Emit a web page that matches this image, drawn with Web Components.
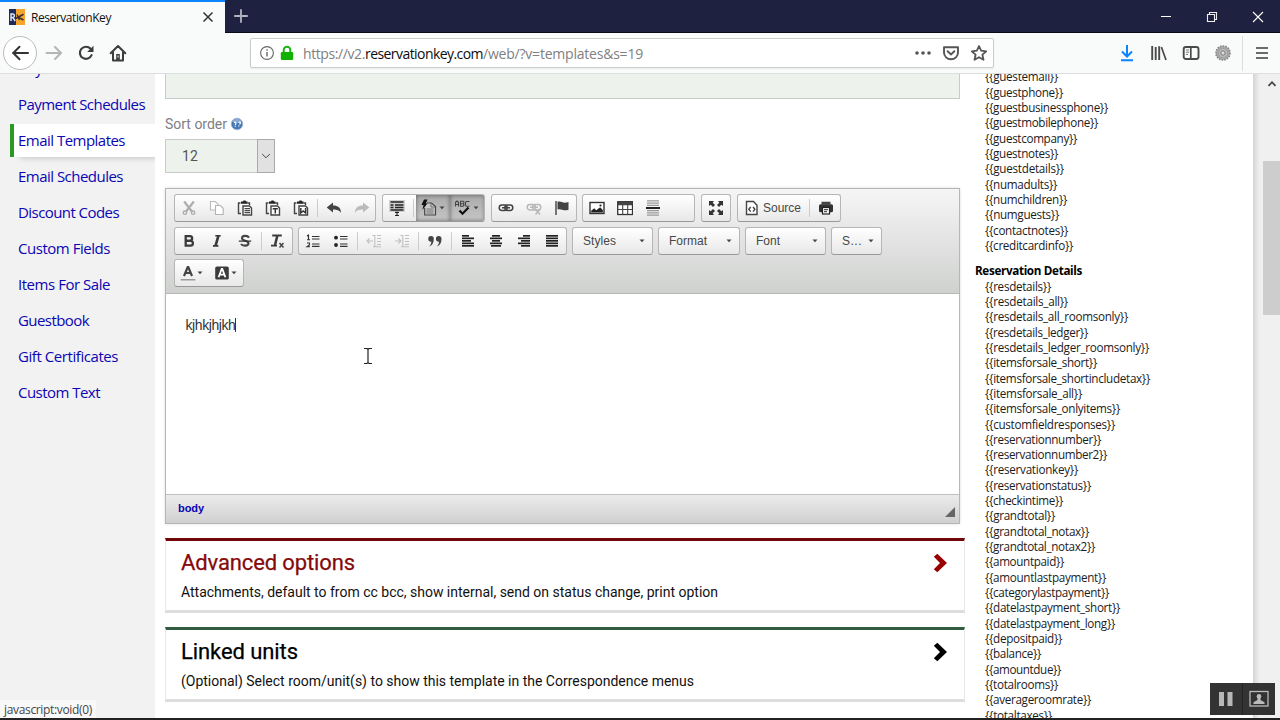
<!DOCTYPE html>
<html lang="en"><head><meta charset="utf-8"><title>ReservationKey</title>
<style>html,body{margin:0;width:1280px;height:720px;overflow:hidden;background:#fff}</style></head>
<body><app-window></app-window>
<script>
const define=(name,html)=>{const t=document.createElement('template');t.innerHTML=html;
customElements.define(name,class extends HTMLElement{constructor(){super();this.attachShadow({mode:'open'}).append(t.content.cloneNode(true));}});};

// Label tracked to a given pixel width
customElements.define('fit-text',class extends HTMLElement{
constructor(){super();this.attachShadow({mode:'open'}).innerHTML='<style>:host{display:inline-block;white-space:nowrap}</style><slot></slot>';}
connectedCallback(){requestAnimationFrame(()=>this.fit());}
fit(){const w=+this.getAttribute('w'),n=this.textContent.length;if(!w)return;
this.style.letterSpacing='0';const d=w-this.getBoundingClientRect().width;this.style.letterSpacing=(d/n)+'px';}
});

const doc='<path d="M3.5 3H1.5V13.5H4M10.5 3h2v2" fill="none" stroke="#444" stroke-width="1.4"/><path d="M4 1.6h2l.5-1.1h2L9 1.6h1.5v2.2H4z" fill="#222"/><path d="M6 6h6.5l2 2v7H6z" fill="#fff" stroke="#444" stroke-width="1.4"/>';
const bars=a=>a.map(([x,w],i)=>`<rect x="${x}" y="${2+i*2.5}" width="${w}" height="1.7" fill="#222"/>`).join('');
const I={
back:[20,'<path d="M18 10H3M9.5 3.8L3.3 10l6.2 6.2" fill="none" stroke="#333" stroke-width="2" stroke-linecap="round"/>'],
fwd:[20,'<path d="M2.5 10H17M11 4l6 6-6 6" fill="none" stroke="#b5b5b6" stroke-width="2" stroke-linecap="round"/>'],
reload:[20,'<path d="M15.6 12.2A6.1 6.1 0 1 1 14.6 5.8" fill="none" stroke="#3c3c3d" stroke-width="2.1" stroke-linecap="round"/><path d="M17.5 2.7v6.3H11.2z" fill="#3c3c3d"/>'],
home:[20,'<path d="M2.7 10.3L10 3l7.3 7.3M5 9.5v8h10v-8" fill="none" stroke="#3c3c3d" stroke-width="2" stroke-linejoin="round" stroke-linecap="round"/><path d="M8.2 11h3.6v6H8.2z" fill="#3c3c3d"/><path d="M10 12.5v2" stroke="#fff"/>'],
info:[16,'<circle cx="8" cy="8" r="6.4" fill="none" stroke="#666" stroke-width="1.1"/><path d="M8 7v4.5M8 4.2v1.6" stroke="#666" stroke-width="1.4"/>'],
lock:[16,'<path d="M4.7 8V5a3.3 3.3 0 0 1 6.6 0v3" fill="none" stroke="#18b511" stroke-width="2"/><rect x="1.8" y="7" width="12.4" height="8" rx="1.2" fill="#12b000"/>'],
dots:[18,'<circle cx="3" cy="9" r="1.8" fill="#555"/><circle cx="9" cy="9" r="1.8" fill="#555"/><circle cx="15" cy="9" r="1.8" fill="#555"/>'],
pocket:[18,'<path d="M2 3.2h14v5.3a7 6.8 0 0 1-14 0z" fill="none" stroke="#555" stroke-width="1.9" stroke-linejoin="round"/><path d="M5.6 7.2L9 10.5l3.4-3.3" fill="none" stroke="#555" stroke-width="1.9" stroke-linecap="round"/>'],
star:[18,'<path d="M9 2l2.1 4.7 5.1.6-3.8 3.4 1.1 5.1L9 13.2l-4.5 2.6 1.1-5.1-3.8-3.4 5.1-.6z" fill="none" stroke="#555" stroke-width="1.8" stroke-linejoin="round"/>'],
down:[18,'<path d="M9 1v11M4 7.5l5 5 5-5M3 16.3h12" fill="none" stroke="#0a84ff" stroke-width="2"/>'],
library:[18,'<path d="M2.2 2v14M5.7 3v13M9.2 2.2V16" stroke="#4a4a4b" stroke-width="1.9"/><path d="M11.4 3l4.6 13" stroke="#4a4a4b" stroke-width="1.7"/>'],
sidebar:[18,'<rect x="1.7" y="3" width="14.8" height="12" rx="2.2" fill="none" stroke="#4a4a4b" stroke-width="1.9"/><path d="M8.8 3v12" stroke="#4a4a4b" stroke-width="1.7"/><path d="M4 6h3M4 8.2h3M4 10.4h2" stroke="#777"/>'],
gear:[18,'<circle cx="9" cy="9" r="7" fill="#aaa" stroke="#888" stroke-width="1.7" stroke-dasharray="1.6 1.1"/><circle cx="9" cy="9" r="4.6" fill="#bbb" stroke="#999" stroke-width=".8"/><circle cx="9" cy="9" r="2.2" fill="#ddd" stroke="#777"/>'],
menu:[16,'<path d="M2 3h12M2 8h12M2 13h12" stroke="#3c3c3d" stroke-width="1.7"/>'],
tabx:[14,'<path d="M2.5 2.5l9 9M11.5 2.5l-9 9" stroke="#333" stroke-width="1.5"/>'],
plus:[16,'<path d="M8 1.2v13.6M1.2 8h13.6" stroke="#b2b3c0" stroke-width="1.8"/>'],
min:[14,'<path d="M2 6.5h10" stroke="#fff" stroke-width="1"/>'],
restore:[14,'<path d="M2.5 4.5h7v7h-7zM4.5 4.5v-2h7v7h-2" fill="none" stroke="#eee" stroke-width="1.1"/>'],
close:[14,'<path d="M2 2l10 10M12 2L2 12" stroke="#fff" stroke-width="1.1"/>'],
fav:[16,'<path fill="#1e2a5a" d="M0 0h8v16H0z"/><path fill="#f5a52b" d="M7 0h9v16H7z"/><path d="M2 12V5h2a1.8 1.8 0 0 1 0 3.5H2M3.8 8.5L6.2 12" stroke="#dfe6f6" stroke-width="1.5" fill="none"/><path d="M6.5 9.5l3-1.5L14.5 5.3M9.5 7.5l1 1.5 4 2" stroke="#3a2b35" stroke-width="1.6" fill="none"/><path d="M8 5.5L10.5 11" stroke="#3a2b35" stroke-width="1.4"/>'],
help:[14,'<circle cx="7" cy="7" r="5.8" fill="#4778b6" stroke="#a4b9d8" stroke-width="1"/><path d="M2 4.5a6 6 0 0 1 10 0C10 6 4 6 2 4.5z" fill="#87a9d5"/><path d="M4 5.5c1-1 2.5-.2 1.8 1L5.2 8M8.5 5.5c1.8-1 3 .2 1 2M5.3 8.8v1M8.8 8.6v1" stroke="#fff" stroke-width="1.2" fill="none"/>'],
cut:[16,'<path d="M3.2 1.5L11.3 12M12.8 1.5L4.7 12" stroke="#aeaeae" stroke-width="2.2"/><circle cx="3.9" cy="12.7" r="1.7" fill="none" stroke="#aeaeae" stroke-width="1.4"/><circle cx="12.1" cy="12.7" r="1.7" fill="none" stroke="#aeaeae" stroke-width="1.4"/>'],
copy:[16,'<path d="M1.5 1.5h4.7L9 4.2V10H1.5z" fill="#fff" stroke="#b9b9b9" stroke-width="1.1"/><path d="M6.5 5.5h4.7l3 2.8v6.2H6.5z" fill="#fff" stroke="#b3b3b3" stroke-width="1.1"/>'],
paste:[16,doc+'<path d="M7.5 8.7h5.5M7.5 10.7h5.5M7.5 12.7h5.5" stroke="#444" stroke-width="1.2"/>'],
pastet:[16,doc+'<path d="M7.7 8.7h5.2M10.3 8.7v4.8" stroke="#333" stroke-width="1.5"/>'],
pastew:[16,doc+'<path d="M7.8 8v5l2.4-2 2.4 2V8" stroke="#333" stroke-width="1.5" fill="none"/>'],
undo:[16,'<path d="M.7 7.5L7 2.5v3c5 0 8 2.2 8 7.5-1.6-2.6-3.7-3.5-8-3.5v3z" fill="#444"/>'],
redo:[16,'<path d="M15.3 7.5L9 2.5v3c-5 0-8 2.2-8 7.5 1.6-2.6 3.7-3.5 8-3.5v3z" fill="#bbb"/>'],
template:[16,'<path fill="#d1d1d1" d="M0 0h16v12H0z"/><path d="M1.5 2h13M1.5 5h3M6 5h8.5M1.5 7.5h3M6 7.5h8.5M1.5 10h13" stroke="#222" stroke-width="1.5"/><path d="M6 12.3h4M8 12v3.8M6 15.6h4" stroke="#222" stroke-width="1.2"/>'],
auto:[18,'<path d="M7 4h4.5l4 3.5V16H4.7V9" fill="#c8c8c8" stroke="#444" stroke-width="1.2"/><path d="M11 4v4h4M6.5 10h7M6.5 12h7M6.5 14h7" fill="none" stroke="#666" stroke-width=".9"/><path d="M4 .5h3.6L5.8 4.5H7.4L2.4 11l1.1-5H1.4z" fill="#111"/>'],
spell:[18,'<path d="M1.5 7.5V3.2L3 2l1.5 1.2v4.3M1.5 5.5h3M6.5 7.3V2.2h2.6q1.8 1.2 0 2.5 1.8 1.3 0 2.6zM6.5 4.7H9M15.5 2.5h-3q-1 0-1 1.2v2.4q0 1.2 1 1.2h3" fill="none" stroke="#444" stroke-width="1.1"/><path d="M5.5 11.5l3 3.2 6-6.3" fill="none" stroke="#111" stroke-width="2.2"/>'],
link:[16,'<rect x="1.2" y="5" width="8" height="5.4" rx="2.7" fill="none" stroke="#444" stroke-width="1.5"/><rect x="6.8" y="5" width="8" height="5.4" rx="2.7" fill="none" stroke="#444" stroke-width="1.5"/><path d="M4 7.7h8" stroke="#444" stroke-width="1.4"/>'],
unlink:[16,'<g fill="none" stroke="#b8b8b8" stroke-width="1.4"><rect x="1.2" y="4.5" width="8.2" height="5.5" rx="2.7"/><rect x="6.6" y="4.5" width="8.2" height="5.5" rx="2.7"/><path d="M4 7.2h8M9.5 9.5l4.5 5M14 9.5l-4.5 5"/></g>'],
flag:[16,'<path d="M2 1v14" stroke="#333" stroke-width="1.3"/><path d="M3.5 1.8c4-1 5 2 11 .3v7.7c-5 1.8-7-1.3-11-.3z" fill="#444"/>'],
image:[16,'<rect x="1" y="2.5" width="14" height="11" fill="#fff" stroke="#333" stroke-width="1.4"/><path d="M2.2 12.5V10.8l3-2.6 2 2 4-3 2.7 3v2.3z" fill="#222"/><circle cx="11.5" cy="5.5" r="1.1" fill="#222"/>'],
table:[16,'<rect x=".7" y="1.7" width="14.8" height="12.8" fill="#fff" stroke="#333" stroke-width="1.3"/><path fill="#444" d="M.7 1.7h14.8v3.5H.7z"/><path d="M1 9.5h14M5.7 4v10.5M10.7 4v10.5" stroke="#444" stroke-width="1.1"/>'],
hr:[16,'<path d="M2 .8h12M2 3.1h12M2 5.3h12M2 10.6h12M2 12.9h12M2 15.1h12" stroke="#999" stroke-width="1.2"/><path d="M1 8h14" stroke="#222" stroke-width="1.8"/>'],
max:[16,'<path d="M1 1h5L4.7 2.7 7 5 5 7 2.7 4.7 1 6zM15 1h-5l1.3 1.7L9 5l2 2 2.3-2.3L15 6zM1 15h5l-1.3-1.7L7 11 5 9l-2.3 2.3L1 10zM15 15h-5l1.3-1.7L9 11l2-2 2.3 2.3L15 10z" fill="#333"/>'],
source:[16,'<path d="M2.5 1.5h7l3.5 3.7v9.3H2.5z" fill="#fff" stroke="#444" stroke-width="1.4"/><path d="M6.7 7L4.8 9.3l1.9 2.3M9 7l1.9 2.3L9 11.6" fill="none" stroke="#444" stroke-width="1.4"/>'],
print:[16,'<path d="M3.5 4.5V1.7h9v2.8" fill="#444"/><rect x="1" y="4.3" width="14" height="8" rx="1.5" fill="#333"/><rect x="4.5" y="7.5" width="7" height="6.5" fill="#fff" stroke="#222" stroke-width="1.2"/><path d="M6 9.7h4M6 11.7h3" stroke="#222"/>'],
bold:[16,'<path d="M4.7 3.2h4.2a2.2 2.2 0 0 1 0 4.5H4.7zM4.7 7.9h4.8a2.4 2.4 0 0 1 0 4.8H4.7z" fill="none" stroke="#3a3a3a" stroke-width="2.3"/>'],
italic:[16,'<path d="M6.3 2.8h5.4M4 12.9h5.4" stroke="#3a3a3a" stroke-width="1.6"/><path d="M9.4 2.8L6.5 12.9" stroke="#3a3a3a" stroke-width="2.6"/>'],
strike:[16,'<path d="M12 4.6C10.5 2.2 5 2.2 5 5.2c0 3 6.7 2 6.5 5.2-.2 2.9-5.9 2.9-7.5.6" fill="none" stroke="#444" stroke-width="2.1"/><path d="M1.8 8.2h12.4" stroke="#333" stroke-width="1.3"/>'],
tx:[16,'<path d="M2.2 2.5h9.6M1 12.7h6" stroke="#3a3a3a" stroke-width="1.8"/><path d="M7.3 3L5 12" stroke="#3a3a3a" stroke-width="2.5"/><path d="M9.5 10l4 4.5M13.5 10l-4 4.5" stroke="#444" stroke-width="1.5"/>'],
ol:[16,'<path d="M7 3.5h7.5M7 6h7.5M7 11h7.5M7 13.3h7.5" stroke="#333" stroke-width="1.2"/><path d="M2 3l1.5-1v4.5M2 6.7h3M2 10h2.4v2L2 13.8h3" fill="none" stroke="#333" stroke-width="1.1"/>'],
ul:[16,'<path d="M7 3.5h7.5M7 6h7.5M7 11h7.5M7 13.3h7.5" stroke="#333" stroke-width="1.2"/><circle cx="3" cy="4.7" r="1.9" fill="#222"/><circle cx="3" cy="12" r="1.9" fill="#222"/>'],
outdent:[16,'<path d="M6.5 2.5H9M11 2.5h4M11 5.5h4M11 8.5h4M11 11.5h4M7 13.7h8M8.8 2v12M1 8h6M3.5 5.5L1 8l2.5 2.5" fill="none" stroke="#c0c0c0" stroke-width="1.1"/>'],
indent:[16,'<path d="M6.5 2.5H9M11 2.5h4M11 5.5h4M11 8.5h4M11 11.5h4M7 13.7h8M8.8 2v12M1 8h6M4.5 5.5L7 8l-2.5 2.5" fill="none" stroke="#c0c0c0" stroke-width="1.1"/>'],
quote:[16,'<path d="M4 3a2.7 2.7 0 0 1 2.8 3c0 4-1.8 6.5-4.6 7.5 1.4-1.5 2.1-3 2.1-4.7A2.8 2.8 0 1 1 4 3zM11.7 3a2.7 2.7 0 0 1 2.8 3c0 4-1.8 6.5-4.6 7.5 1.4-1.5 2.1-3 2.1-4.7A2.8 2.8 0 1 1 11.7 3z" fill="#444"/>'],
al:[16,bars([[2,7],[2,12],[2,9],[2,12],[2,12]])],
ac:[16,bars([[4,8],[2,12],[4,8],[2,12],[3,10]])],
ar:[16,bars([[7,7],[2,12],[5,9],[2,12],[5,9]])],
aj:[16,bars([[2,12],[2,12],[2,12],[2,12],[2,12]])],
fg:[16,'<path d="M4 11L7.7 2.2h.6L12 11M5.3 8h5.4" fill="none" stroke="#444" stroke-width="2.2"/><path d="M.7 14.7h14.6" stroke="#999" stroke-width="1.4"/>'],
bg:[16,'<rect x="1.2" y="1.4" width="13.6" height="13.2" rx="1.6" fill="#3c3c3c"/><path d="M4.6 12.3L7.7 4h.6l3.1 8.3M5.7 9.6h4.6" fill="none" stroke="#fff" stroke-width="1.8"/>'],
caret:[8,'<path d="M1.5 2.6h5L4 5.3z" fill="#444"/>'],
chev:[14,'<path d="M3.2 5l3.8 3.8L10.8 5" fill="none" stroke="#444" stroke-width="1"/>'],
up:[14,'<path d="M3.5 8.8L7 5.2l3.5 3.6" fill="none" stroke="#444" stroke-width="1.8"/>'],
next:[20,'<path d="M2.8 3.8L6.3.7 16 10l-9.7 9.3-3.5-3.1L9 10z" fill="currentColor"/>'],
pause:[18,'<path d="M2 2h5v14H2zM10.5 2h5v14h-5z" fill="#b8b8b8"/>'],
user:[20,'<rect x="1" y="2.5" width="18" height="14.5" fill="none" stroke="#bbb" stroke-width="1.3"/><circle cx="10" cy="7.3" r="2.3" fill="#bbb"/><path d="M8.5 8h3v3l4 2.2V15H4.5v-1.8l4-2.2z" fill="#bbb"/>'],
ibeam:[18,'<path d="M5 1.5h3l1 1 1-1h3M9 2.5v13M5 16.5h3l1-1 1 1h3" fill="none" stroke="#222" stroke-width="1.2"/>']
};
customElements.define('ui-icon',class extends HTMLElement{connectedCallback(){
const [s,p]=I[this.getAttribute('name')],r=this.shadowRoot||this.attachShadow({mode:'open'});
r.innerHTML=`<style>:host{display:block;width:${s}px;height:${s}px;flex:none}svg{display:block}</style><svg width="${s}" height="${s}" viewBox="0 0 ${s} ${s}">${p}</svg>`;}});

define('tab-strip',`<style>:host{display:flex;height:33px;box-sizing:border-box;background:#1e2240;border-bottom:1px solid #0a0b16}
.tab{width:225px;height:33px;box-sizing:border-box;border-top:2px solid #0a84ff;background:#f9fafa;display:flex;align-items:center;padding:0 10px 1px 9px;font:12px "Open Sans",sans-serif;color:#111}
.name{margin-left:6px;flex:1}.win{margin-left:auto;display:flex;gap:32px;padding:10px 15.5px 0 0}
.new{margin:8px 0 0 8px}</style>
<div class="tab"><ui-icon name="fav"></ui-icon><span class="name"><fit-text w="80">ReservationKey</fit-text></span><ui-icon name="tabx"></ui-icon></div>
<ui-icon class="new" name="plus"></ui-icon>
<div class="win"><ui-icon name="min"></ui-icon><ui-icon name="restore"></ui-icon><ui-icon name="close"></ui-icon></div>`);

define('nav-bar',`<style>:host{display:flex;align-items:center;height:41px;box-sizing:border-box;background:#f9fafa;border-bottom:1px solid #dcdfe0;padding-left:3px}
.back{width:32px;height:32px;border:1px solid #bbb;border-radius:50%;background:#fff;display:grid;place-items:center;flex:none}
.nav{display:flex;gap:12px;margin-left:6.5px;width:208.5px;flex:none}
.url{width:744px;height:30px;box-sizing:border-box;border:1px solid #ccc;border-radius:2px;background:#fff;display:flex;align-items:center;padding:0 5px 0 7.5px;font:14px "Open Sans",sans-serif;color:#808080;box-shadow:0 1px 2px #0001;margin-left:-2px;flex:none}
.txt{margin-left:8.5px;flex:1;white-space:nowrap;font-size:0}.txt fit-text{font-size:14px}
.acts{display:flex;gap:10px}.tools{display:flex;gap:14px;margin-left:124px}.sep{width:1px;height:35px;background:#ddd;margin:0 11px 0 10px}</style>
<div class="back"><ui-icon name="back"></ui-icon></div><div class="nav"><ui-icon name="fwd"></ui-icon><ui-icon name="reload"></ui-icon><ui-icon name="home"></ui-icon></div>
<div class="url"><ui-icon name="info"></ui-icon><ui-icon name="lock" style="margin-left:4px"></ui-icon><span class="txt"><fit-text w="62">https://v2.</fit-text><fit-text w="118" style="color:#0c0c0d">reservationkey.com</fit-text><fit-text w="160">/web/?v=templates&amp;s=19</fit-text></span>
<div class="acts"><ui-icon name="dots"></ui-icon><ui-icon name="pocket"></ui-icon><ui-icon name="star"></ui-icon></div></div>
<div class="tools"><ui-icon name="down"></ui-icon><ui-icon name="library"></ui-icon><ui-icon name="sidebar"></ui-icon><ui-icon name="gear"></ui-icon></div><span class="sep"></span><ui-icon name="menu"></ui-icon>`);

const menu=[['Payment Schedules',127],['Email Templates',107],['Email Schedules',105],['Discount Codes',101],['Custom Fields',92],['Items For Sale',92],['Guestbook',71],['Gift Certificates',100],['Custom Text',82]];
define('side-menu',`<style>:host{display:flow-root;width:155px;height:643px;background:#f2f2f2;overflow:hidden;font:15px/36px "Open Sans",sans-serif;color:#0c05b4}
.item{height:36px;padding-left:18px}.first{margin-top:-24.5px}
.on{height:33px;line-height:33px;margin:2px 0 1px 10px;padding-left:4px;border-left:4px solid #2a9a22;background:#fff;box-shadow:6px 5px 6px -4px #0003}</style>
<div class="item first">Payments</div>${menu.map(([t,w],i)=>`<div class="item ${i==1?'on':''}"><fit-text w="${w}">${t}</fit-text></div>`).join('')}`);

define('tool-group',`<style>:host{display:flex;align-items:center;height:28px;box-sizing:border-box;border:1px solid #b6b6b6;border-bottom-color:#999;border-radius:3px;background:linear-gradient(#fff,#e8e8e8);overflow:hidden;flex:none}</style><slot></slot>`);
define('tool-sep',`<style>:host{display:block;width:1px;height:18px;background:#ccc;margin:0 2px;flex:none}</style>`);
customElements.define('tool-button',class extends HTMLElement{connectedCallback(){const r=this.attachShadow({mode:'open'});const on=this.hasAttribute('on'),m=this.hasAttribute('menu');
r.innerHTML=`<style>:host{display:flex;align-items:center;justify-content:center;height:26px;width:${m?34:28}px;flex:none;${on?'background:linear-gradient(#aaa,#c6c6c6);box-shadow:inset 0 0 4px #0007;':''}}</style><ui-icon name="${this.getAttribute('icon')}"></ui-icon>${m?'<ui-icon name="caret"></ui-icon>':''}`;}});
customElements.define('tool-combo',class extends HTMLElement{connectedCallback(){const r=this.attachShadow({mode:'open'});
r.innerHTML=`<style>:host{display:flex;align-items:center;justify-content:space-between;height:28px;width:${this.getAttribute('width')}px;box-sizing:border-box;padding:0 6px 0 10px;border:1px solid #b6b6b6;border-bottom-color:#999;border-radius:3px;background:linear-gradient(#fff,#e8e8e8);font:12px "Liberation Sans",sans-serif;color:#474747}</style><slot></slot><ui-icon name="caret"></ui-icon>`;}});

const b=(...n)=>n.map(x=>x=='|'?'<tool-sep></tool-sep>':`<tool-button icon="${x}"></tool-button>`).join('');
define('rich-editor',`<style>:host{display:flex;flex-direction:column;width:795px;height:336px;box-sizing:border-box;border:1px solid #b6b6b6;background:#fff;box-shadow:0 0 3px #0002}
.top{height:105px;box-sizing:border-box;padding:5px 8px;background:linear-gradient(#f5f5f5,#cfd1cf);border-bottom:1px solid #b6b6b6;display:flex;flex-direction:column;gap:4px}
.row{display:flex;gap:5.8px}.area{flex:1;padding:22px 19.5px 0;font:14px/18px "Liberation Sans",sans-serif;color:#333;display:flex;align-items:flex-start}
.car{width:1px;height:14px;background:#333;margin:2px 0 0 -1px}
.foot{height:29px;box-sizing:border-box;border-top:1px solid #bfbfbf;background:linear-gradient(#ebebeb,#cfd1cf);display:flex;align-items:center;justify-content:space-between;padding:0 4px 2px 12px;font:bold 11px "Liberation Sans",sans-serif;color:#0a05b5}
.grip{border:5px solid transparent;border-right-color:#666;border-bottom-color:#666;margin-top:7px;width:0;height:0}</style>
<div class="top"><div class="row">
<tool-group style="width:202px">${b('cut','copy','paste','pastet','pastew','|','undo','redo')}</tool-group>
<tool-group style="width:103px">${b('template','|')}<tool-button icon="auto" menu on></tool-button><tool-button icon="spell" menu on style="width:35px"></tool-button></tool-group>
<tool-group style="width:86px">${b('link','unlink','flag')}</tool-group><tool-group style="width:113px">${b('image','table','hr')}</tool-group><tool-group style="width:30px">${b('max')}</tool-group>
<tool-group style="width:104px;font:12px 'Liberation Sans',sans-serif;color:#474747"><ui-icon name="source" style="margin:0 3px 0 6px"></ui-icon><fit-text w="38">Source</fit-text><tool-sep style="margin:0 2px 0 8px"></tool-sep>${b('print')}</tool-group></div>
<div class="row" style="gap:5px;margin-top:1px"><tool-group style="width:119px">${b('bold','italic','strike','|','tx')}</tool-group><tool-group style="width:269px">${b('ol','ul','|','outdent','indent','|','quote','|','al','ac','ar','aj')}</tool-group>
<tool-combo width="81"><fit-text w="33">Styles</fit-text></tool-combo><tool-combo width="82"><fit-text w="38">Format</fit-text></tool-combo><tool-combo width="81"><fit-text w="24">Font</fit-text></tool-combo><tool-combo width="51"><fit-text w="20">S...</fit-text></tool-combo></div>
<div class="row"><tool-group style="width:70px"><tool-button icon="fg" menu></tool-button><tool-button icon="bg" menu></tool-button></tool-group></div></div>
<div class="area"><fit-text w="50">kjhkjhjkh</fit-text><span class="car"></span></div>
<div class="foot"><fit-text w="26">body</fit-text><span class="grip"></span></div>`);

define('option-card',`<style>:host{display:flex;justify-content:space-between;width:800px;height:75px;box-sizing:border-box;border:1px solid #e8e8e8;border-top:3px solid var(--line);border-bottom:3px solid #ddd;background:#fff;padding:8px 13px 0 15px;font:14px "Roboto",sans-serif;color:#111}
.t{font-size:22px;line-height:28px;color:var(--head);font-weight:400;-webkit-text-stroke:.25px}.d{margin-top:5px;line-height:20px}ui-icon{color:var(--arrow);margin-top:4px}</style>
<div><div class="t"><slot name="title"></slot></div><div class="d"><slot></slot></div></div><ui-icon name="next"></ui-icon>`);

define('main-form',`<style>:host{display:block;width:800px;height:643px;padding-left:10px;overflow:hidden;font:14px "Roboto",sans-serif;color:#7c8084}
.field{width:795px;height:25px;box-sizing:border-box;background:#edf3ec;border:1px solid #c8ccc8;border-top:0}
.label{display:flex;align-items:center;height:20px;margin-top:15px;gap:3px}
.select{display:flex;justify-content:space-between;width:110px;height:34px;box-sizing:border-box;margin-top:5px;border:1px solid #c8ccc8;background:#edf3ec;line-height:32px;padding-left:16px;color:#555}
.arr{width:16px;margin:-1px;border:1px solid #aaa;background:#e1e1e1;display:grid;place-items:center}
rich-editor{margin-top:15px}option-card{margin-top:14px}</style>
<div class="field"></div><div class="label"><fit-text w="62">Sort order</fit-text><ui-icon name="help"></ui-icon></div><div class="select"><fit-text w="16">12</fit-text><span class="arr"><ui-icon name="chev"></ui-icon></span></div>
<rich-editor></rich-editor>
<option-card style="--line:#730608;--head:#86090c;--arrow:#900"><fit-text slot="title" w="174">Advanced options</fit-text><fit-text w="537">Attachments, default to from cc bcc, show internal, send on status change, print option</fit-text></option-card>
<option-card style="--line:#315c42;--head:#000;--arrow:#000"><fit-text slot="title" w="117">Linked units</fit-text><fit-text w="513">(Optional) Select room/unit(s) to show this template in the Correspondence menus</fit-text></option-card>`);

const guest='guestemail 1058,guestphone 1063,guestbusinessphone 1108,guestmobilephone 1098,guestcompany 1077,guestnotes 1058,guestdetails 1064,numadults 1057,numchildren 1067,numguests 1059,contactnotes 1068,creditcardinfo 1073';
const res='resdetails 1051,resdetails_all 1068,resdetails_all_roomsonly 1128,resdetails_ledger 1088,resdetails_ledger_roomsonly 1149,itemsforsale_short 1097,itemsforsale_shortincludetax 1150,itemsforsale_all 1082,itemsforsale_onlyitems 1120,customfieldresponses 1115,reservationnumber 1101,reservationnumber2 1107,reservationkey 1078,reservationstatus 1091,checkintime 1063,grandtotal 1055,grandtotal_notax 1089,grandtotal_notax2 1095,amountpaid 1064,amountlastpayment 1106,categorylastpayment 1109,datelastpayment_short 1120,datelastpayment_long 1115,depositpaid 1062,balance 1041,amountdue 1061,totalrooms 1058,averageroomrate 1091,totaltaxes 1052';
const rows=s=>s.split(',').map(x=>{const[n,e]=x.split(' ');return `<div><fit-text w="${e-985}">{{${n}}}</fit-text></div>`}).join('');
define('code-list',`<style>:host{display:block;box-sizing:border-box;width:283px;height:643px;overflow:hidden;padding-left:5px;font:11.7px/15.34px "Open Sans",sans-serif;color:#1c1c1c}
div{height:15.34px;padding-left:10px}.g{padding:0;height:auto;margin-top:-4.6px}.h{font-weight:700;color:#000;padding:0;margin:9.7px 0 .2px}</style>
<div class="g">${rows(guest)}</div><div class="h"><fit-text w="107">Reservation Details</fit-text></div><div class="g" style="margin:0">${rows(res)}</div>`);

define('scroll-bar',`<style>:host{display:flex;width:27px;height:643px}.sh{width:10px;background:linear-gradient(90deg,#d4d4d4,#eee 60%,#f2f2f2)}.bar{width:17px;background:#f0f0f0}ui-icon{margin:3px 0 0 1.5px}.thumb{height:154px;background:#cdcdcd;margin-top:70px}</style>
<div class="sh"></div><div class="bar"><ui-icon name="up"></ui-icon><div class="thumb"></div></div>`);

define('media-controls',`<style>:host{display:flex;width:65px;height:32px;background:#333;position:absolute;left:1210px;top:683px}div{width:32px;display:grid;place-items:center}div+div{border-left:1px solid #222}</style><div><ui-icon name="pause"></ui-icon></div><div><ui-icon name="user"></ui-icon></div>`);
define('status-tip',`<style>:host{position:absolute;left:0;bottom:2px;width:96px;height:18px;box-sizing:border-box;padding-left:4px;background:#f9f9fa;font:12px/19px "Open Sans",sans-serif;color:#444}</style><fit-text w="88">javascript:void(0)</fit-text>`);

define('app-window',`<style>:host{display:block;position:relative;width:1280px;height:720px;overflow:hidden}.body{display:flex;height:644px}.end{height:2px;background:#222}side-menu,main-form,scroll-bar,code-list{flex:none;height:644px}main-form{padding-right:5px}.cur{position:absolute;left:359px;top:347px}</style>
<tab-strip></tab-strip><nav-bar></nav-bar><div class="body"><side-menu></side-menu><main-form></main-form><code-list></code-list><scroll-bar></scroll-bar></div><div class="end"></div>
<status-tip></status-tip><media-controls></media-controls><ui-icon class="cur" name="ibeam"></ui-icon>`);
</script></body></html>
